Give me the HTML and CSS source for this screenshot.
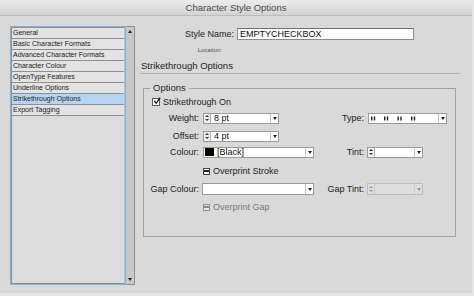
FILE: index.html
```html
<!DOCTYPE html>
<html>
<head>
<meta charset="utf-8">
<link rel="stylesheet" href="styles.css">
</head>
<body>
<div class="window">
  <div class="titlebar">Character Style Options</div>
  <div class="content">
    <div class="sidebar">
      <div class="list">
        <div class="list-inner">
          <div class="item">General</div>
          <div class="item">Basic Character Formats</div>
          <div class="item">Advanced Character Formats</div>
          <div class="item">Character Colour</div>
          <div class="item">OpenType Features</div>
          <div class="item">Underline Options</div>
          <div class="item selected">Strikethrough Options</div>
          <div class="item">Export Tagging</div>
        </div>
      </div>
      <div class="scrollbar"><span class="sb-up"></span><span class="sb-down"></span></div>
    </div>
    <div class="main">
      <div class="name-row"><span class="name-label">Style Name:</span><div class="name-input">EMPTYCHECKBOX</div></div>
      <div class="location">Location:</div>
      <div class="section-title">Strikethrough Options</div>
      <div class="separator"></div>
      <fieldset class="group">
        <legend>Options</legend>
        <div class="grid">
          <div class="cell span-all check-row"><span class="cb checked"><svg width="8" height="8" viewBox="0 0 8 8"><path d="M1.3 3.8 L3.2 6.2 L7.2 0.6" fill="none" stroke="#111" stroke-width="1.3"/></svg></span><span class="cb-label">Strikethrough On</span></div>

          <div class="cell label">Weight:</div>
          <div class="cell"><div class="box w76"><span class="spin"><i class="up"></i><i class="down"></i></span><span class="val">8 pt</span><span class="arrow"><i></i></span></div></div>
          <div class="cell label label2">Type:</div>
          <div class="cell"><div class="box w79 type-box"><span class="val pattern"><svg width="62" height="11" viewBox="0 0 62 11"><g fill="#222"><rect x="2" y="3.5" width="1.4" height="4"/><rect x="4.8" y="3.5" width="1.4" height="4"/><rect x="15" y="3.5" width="1.4" height="4"/><rect x="17.8" y="3.5" width="1.4" height="4"/><rect x="28.5" y="3.5" width="1.4" height="4"/><rect x="31.3" y="3.5" width="1.4" height="4"/><rect x="42" y="3.5" width="1.4" height="4"/><rect x="44.8" y="3.5" width="1.4" height="4"/></g></svg></span><span class="arrow"><i></i></span></div></div>

          <div class="cell label">Offset:</div>
          <div class="cell"><div class="box w76"><span class="spin"><i class="up"></i><i class="down"></i></span><span class="val">4 pt</span><span class="arrow"><i></i></span></div></div>
          <div class="cell"></div>
          <div class="cell"></div>

          <div class="cell label">Colour:</div>
          <div class="cell"><div class="box w111"><span class="swatch"></span><span class="val">[Black]</span><span class="arrow"><i></i></span></div></div>
          <div class="cell label label2">Tint:</div>
          <div class="cell"><div class="box w56"><span class="spin"><i class="up"></i><i class="down"></i></span><span class="val"></span><span class="arrow"><i></i></span></div></div>

          <div class="cell"></div>
          <div class="cell check-row"><span class="cb mixed"><b></b></span><span class="cb-label">Overprint Stroke</span></div>
          <div class="cell"></div>
          <div class="cell"></div>

          <div class="cell label">Gap Colour:</div>
          <div class="cell"><div class="box w112 tall"><span class="val"></span><span class="arrow"><i></i></span></div></div>
          <div class="cell label label2">Gap Tint:</div>
          <div class="cell"><div class="box w56 tall disabled"><span class="spin"><i class="up"></i><i class="down"></i></span><span class="val"></span><span class="arrow"><i></i></span></div></div>

          <div class="cell"></div>
          <div class="cell check-row"><span class="cb mixed disabled"><b></b></span><span class="cb-label disabled">Overprint Gap</span></div>
          <div class="cell"></div>
          <div class="cell"></div>
        </div>
      </fieldset>
    </div>
  </div>
</div>
</body>
</html>
```
FILE: styles.css
```css
* { box-sizing: border-box; }
html, body { margin: 0; padding: 0; }
body {
  width: 474px;
  height: 296px;
  background: #e6e6e6;
  font-family: "Liberation Sans", Arial, sans-serif;
  color: #222;
  overflow: hidden;
}
.window {
  width: 472px;
  height: 293px;
  background: #d9d9d9;
}
.titlebar {
  height: 16px;
  padding-top: 1px;
  line-height: 14px;
  font-size: 9.5px;
  text-align: center;
  color: #4a4a4a;
  background: linear-gradient(#ececec, #d3d3d3);
  border-bottom: 1px solid #bcbcbc;
}
.content {
  display: flex;
  padding: 10px 0 0 10px;
}
.sidebar {
  display: flex;
  height: 259px;
}
.list {
  width: 116px;
  height: 259px;
  border: 1px solid #7db1de;
}
.list-inner {
  height: 100%;
  border: 1px solid #8e8e8e;
  border-right-color: #a8c7e4;
  background: #dcdcdc;
}
.item {
  height: 11px;
  line-height: 10px;
  font-size: 7px;
  padding-left: 1px;
  color: #222;
  background: #e3e3e3;
  border-bottom: 1px solid #8f8f8f;
  white-space: nowrap;
}
.item.selected { background: #b6d5f2; }
.scrollbar {
  width: 9px;
  height: 259px;
  background: #c8c8c8;
  border: 1px solid #8f8f8f;
  border-left: none;
  display: flex;
  flex-direction: column;
  justify-content: space-between;
  align-items: center;
  padding: 3px 0 3px;
}
.sb-up, .sb-down { width: 0; height: 0; border-left: 2.5px solid transparent; border-right: 2.5px solid transparent; }
.sb-up { border-bottom: 3px solid #222; }
.sb-down { border-top: 3px solid #222; }

.main {
  margin-left: 5px;
  width: 320px;
  font-size: 9px;
}
.name-row {
  margin-top: 2px;
  height: 12px;
  display: flex;
  align-items: center;
}
.name-label {
  width: 94px;
  text-align: right;
  margin-right: 3px;
  font-size: 9px;
}
.name-input {
  width: 177px;
  height: 12px;
  background: #fff;
  border: 1px solid #8c8c8c;
  border-top-color: #707070;
  font-size: 9px;
  line-height: 10px;
  padding-left: 2px;
  color: #111;
}
.location {
  margin-top: 5px;
  height: 10px;
  width: 82px;
  text-align: right;
  font-size: 6px;
  line-height: 10px;
  color: #555;
}
.section-title {
  margin-top: 4px;
  height: 13px;
  line-height: 13px;
  font-size: 9.5px;
  padding-left: 1px;
}
.separator {
  margin-top: 1px;
  width: 320px;
  height: 1px;
  background: #b2b2b2;
}
.group {
  margin: 8px 0 0 3px;
  width: 313px;
  height: 155px;
  padding: 0;
  border: 1px solid #a3a3a3;
  min-width: 0;
}
.group legend {
  margin-left: 6px;
  padding: 0 3px;
  font-size: 9.5px;
  line-height: 12px;
}
.grid {
  padding-top: 2px;
  display: grid;
  grid-template-columns: 59px 112px 52px 80px;
  grid-template-rows: 16px 18px 16px 19px 18px 18px 12px;
}
.cell {
  height: 12px;
  align-self: start;
  display: flex;
  align-items: center;
}
.span-all { grid-column: 1 / -1; }
.label {
  justify-content: flex-end;
  padding-right: 4px;
  font-size: 9px;
  white-space: nowrap;
}
.label.label2 { padding-right: 3px; }
.check-row.span-all { padding-left: 8px; }
.cb {
  width: 8px;
  height: 8px;
  background: #fff;
  border: 1px solid #5a5a5a;
  margin-right: 3px;
  display: flex;
  align-items: center;
  justify-content: center;
  flex: none;
}
.cb.checked svg { display: block; margin-top: -2px; margin-right: -2px; }
.cb.mixed { width: 7px; height: 7px; margin-right: 3px; border-color: #444; }
.cb.mixed b { display: block; width: 5px; height: 2px; background: #222; }
.cb.mixed.disabled { border-color: #8f8f8f; background: #e6e6e6; }
.cb.mixed.disabled b { background: #888; }
.cb-label { font-size: 9px; white-space: nowrap; }
.cb-label.disabled { color: #7a7a7a; }

.box {
  height: 11px;
  background: #fff;
  border: 1px solid #9b9b9b;
  display: flex;
  align-items: stretch;
  font-size: 9px;
  line-height: 9px;
}
.box.tall { height: 12px; }
.w76 { width: 76px; }
.w79 { width: 79px; margin-left: 1px; }
.w111 { width: 111px; }
.w112 { width: 112px; margin-left: -1px; }
.w56 { width: 56px; }
.spin {
  width: 7px;
  flex: none;
  border-right: 1px solid #b5b5b5;
  background: #f1f1f1;
  display: flex;
  flex-direction: column;
  justify-content: space-around;
  align-items: center;
  padding: 1px 0;
}
.spin i { display: block; width: 0; height: 0; border-left: 2px solid transparent; border-right: 2px solid transparent; }
.spin .up { border-bottom: 2px solid #333; }
.spin .down { border-top: 2px solid #333; }
.val {
  flex: 1;
  padding-left: 3px;
  white-space: nowrap;
  color: #111;
  display: flex;
  align-items: center;
}
.pattern { padding-left: 0; }
.pattern svg { display: block; }
.swatch {
  width: 9px;
  height: 8px;
  margin: auto 0 auto 1px;
  background: #000;
  flex: none;
}
.swatch + .val { padding-left: 3px; }
.arrow {
  width: 8px;
  flex: none;
  border-left: 1px solid #c4c4c4;
  display: flex;
  align-items: center;
  justify-content: center;
}
.arrow i { display: block; width: 0; height: 0; border-left: 2.5px solid transparent; border-right: 2.5px solid transparent; border-top: 3px solid #222; }
.box.disabled { background: #dedede; border-color: #bdbdbd; }
.box.disabled .spin { background: #dedede; border-right-color: #c8c8c8; }
.box.disabled .spin .up { border-bottom-color: #999; }
.box.disabled .spin .down { border-top-color: #999; }
.box.disabled .arrow { border-left-color: #d0d0d0; }
.box.disabled .arrow i { border-top-color: #999; }
```
